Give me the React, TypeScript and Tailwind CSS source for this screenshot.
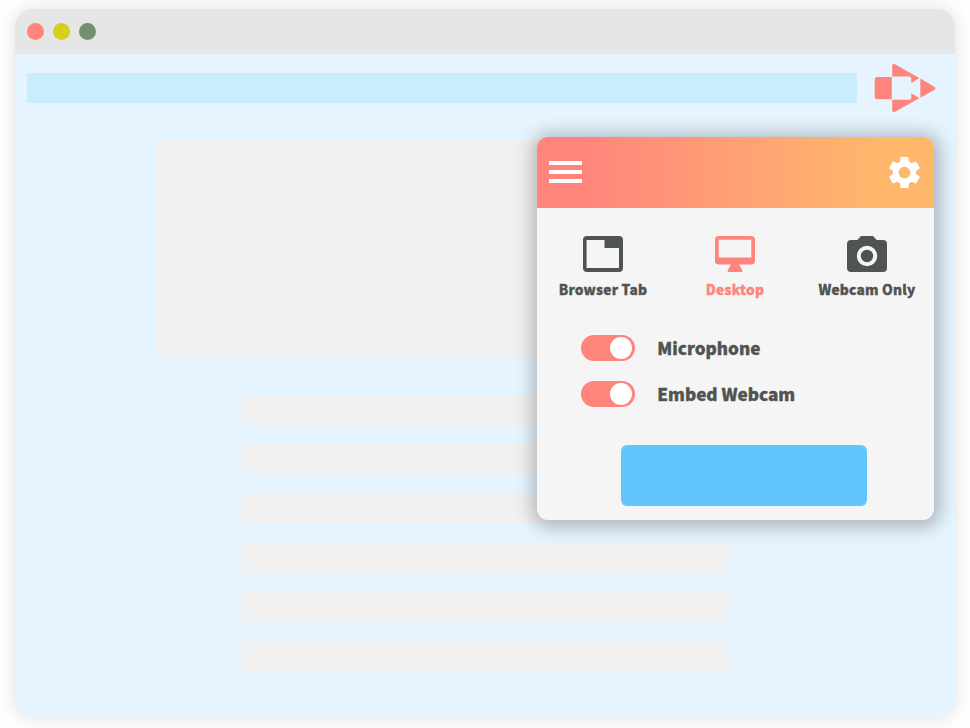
import type { ReactNode } from 'react';
import { MdSettings } from 'react-icons/md';

const lines = [1, 2, 3, 4, 5, 6];

const Logo = () => (
  <svg viewBox="0 0 62 50" className="h-[50px] w-[62px]" fill="#ff847c">
    <path d="M3.5 14H17.8V36.3H3.5Q.7 36.3 .7 33.5V16.8Q.7 14 3.5 14Z" />
    <path d="M18.2 13.6V3Q18.2 0 21 1.2L45.3 14.9L37.3 20.3V16.2Q37.3 13.6 34.8 13.6Z" />
    <path d="M18.2 36.8V47Q18.2 50 21 48.7L45.3 35.2L37.3 30.3V34.2Q37.3 36.8 34.8 36.8Z" />
    <path d="M46.3 15.6L60.6 23.9Q62.4 25.3 60.6 26.7L46.3 34.7Z" />
  </svg>
);

const TabIcon = () => (
  <svg viewBox="0 0 40 36" className="h-9 w-10" fill="currentColor" fillRule="evenodd">
    <path d="M4 0H36Q40 0 40 4V32Q40 36 36 36H4Q0 36 0 32V4Q0 0 4 0ZM3.6 4V32H36V12H21.5V4Z" />
  </svg>
);

const DesktopIcon = () => (
  <svg viewBox="0 0 40 36" className="h-9 w-10" fill="currentColor" fillRule="evenodd">
    <path d="M4 0H36Q40 0 40 4V25Q40 28.5 36 28.5H24L27.3 34.2V36H12.7V34.2L16 28.5H4Q0 28.5 0 25V4Q0 0 4 0ZM3.7 3.8V21.5H36.3V3.8Z" />
  </svg>
);

const CameraIcon = () => (
  <svg viewBox="0 0 40 36" className="h-9 w-10" fill="currentColor" fillRule="evenodd">
    <path d="M14 0H26L29.7 4H36Q40 4 40 8V32Q40 36 36 36H4Q0 36 0 32V8Q0 4 4 4H10.3ZM20 9.8A10.2 10.2 0 1 0 20 30.2A10.2 10.2 0 1 0 20 9.8Z" />
    <circle cx="20" cy="20" r="6.2" />
  </svg>
);

const Mode = ({ label, active, children }: { label: string; active?: boolean; children: ReactNode }) => (
  <button className={`flex w-[132px] flex-col items-center ${active ? 'text-[#ff847c]' : 'text-[#505450]'}`}>
    {children}
    <span className="mt-[6px] whitespace-nowrap text-[13.7px] leading-[22px] font-black tracking-[0.22px] [-webkit-text-stroke:0.35px_currentColor]">
      {label}
    </span>
  </button>
);

const Toggle = ({ label }: { label: string }) => (
  <div className="flex h-[26px] items-center">
    <div className="flex h-[26px] w-[54px] items-center justify-end rounded-full bg-[#ff847c] pr-[3px]">
      <div className="size-[22px] rounded-full bg-white" />
    </div>
    <span className="ml-[22.3px] whitespace-nowrap text-[17.1px] leading-[26px] font-black text-[#505450] [-webkit-text-stroke:0.35px_currentColor]">
      {label}
    </span>
  </div>
);

const Popup = () => (
  <div className="absolute left-[522px] top-[128px] h-[383px] w-[397px] overflow-hidden rounded-[11px] bg-[#f5f5f5] shadow-[1px_2px_18px_5px_rgba(0,0,0,0.26)]">
    <div className="flex h-[71px] items-center justify-between bg-linear-to-r from-[#ff847c] from-10% to-[#ffb76c] to-85% pl-3 pr-[10px]">
      <div className="-mt-[2px] flex w-[33px] flex-col gap-[5px]">
        <div className="h-1 bg-white" />
        <div className="h-1 bg-white" />
        <div className="h-1 bg-white" />
      </div>
      <MdSettings size={39} className="text-white" />
    </div>
    <div className="mt-7 flex">
      <Mode label="Browser Tab">
        <TabIcon />
      </Mode>
      <Mode label="Desktop" active>
        <DesktopIcon />
      </Mode>
      <Mode label="Webcam Only">
        <CameraIcon />
      </Mode>
    </div>
    <div className="mt-[35px] ml-11 flex flex-col gap-5">
      <Toggle label="Microphone" />
      <Toggle label="Embed Webcam" />
    </div>
    <div className="mt-[37.5px] ml-[84px] h-[61.5px] w-[246px] rounded-md bg-[#62c6fc]" />
  </div>
);

export default function App() {
  return (
    <div className="h-[728px] w-[970px] overflow-hidden bg-[#fefefe] px-[15px] pt-[9px] font-['Noto_Sans_CJK_JP',sans-serif]">
      <div className="relative h-[709px] w-[940px] rounded-[18px] bg-[#e5f4fe] shadow-[0_0_18px_rgba(0,0,0,0.12)]">
        <div className="flex h-[44.5px] items-center gap-[9px] rounded-t-[18px] bg-[#e6e6e6] pl-3">
          <div className="size-[17px] rounded-full bg-[#ff847c]" />
          <div className="size-[17px] rounded-full bg-[#d9ce1b]" />
          <div className="size-[17px] rounded-full bg-[#738f6c]" />
        </div>
        <div className="flex h-[86.5px] justify-between pl-3 pr-[19px]">
          <div className="mt-[19.5px] h-[30px] w-[830px] bg-[#caecff]" />
          <div className="mt-[9.5px]">
            <Logo />
          </div>
        </div>
        <div className="ml-[141px] h-[217.5px] w-[658px] bg-[#f0f0f0]" />
        <div className="mt-[37px] ml-[227px] flex w-[487px] flex-col gap-[19.4px]">
          {lines.map((line) => (
            <div key={line} className="h-[30px] bg-[#f0f0f0]" />
          ))}
        </div>
        <Popup />
      </div>
    </div>
  );
}
